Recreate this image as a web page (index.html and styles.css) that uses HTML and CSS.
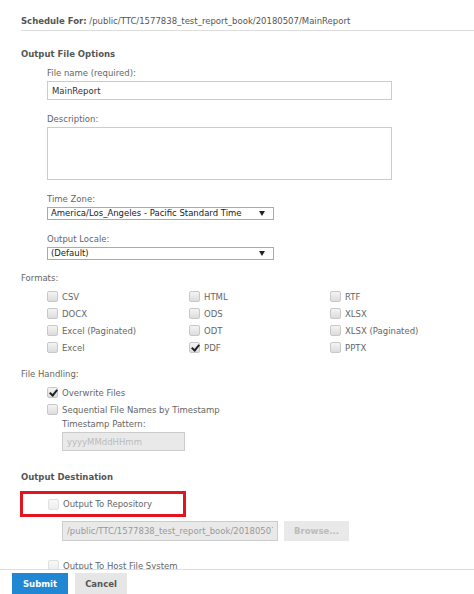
FILE: index.html
```html
<!DOCTYPE html>
<html lang="en">
<head>
  <meta charset="UTF-8">
  <title>Schedule Report</title>
  <link rel="stylesheet" href="styles.css">
</head>
<body>
  <div class="page">
    <div class="scroll">
      <div class="schedule-for"><b>Schedule For:</b> /public/TTC/1577838_test_report_book/20180507/MainReport</div>

      <h3 class="group-title">Output File Options</h3>
      <div class="group">
        <label class="field-label first">File name (required):</label>
        <input class="text wide" type="text" value="MainReport">

        <label class="field-label">Description:</label>
        <textarea class="text wide area"></textarea>

        <label class="field-label">Time Zone:</label>
        <div class="select">America/Los_Angeles - Pacific Standard Time<span class="arrow"></span></div>

        <label class="field-label">Output Locale:</label>
        <div class="select">(Default)<span class="arrow"></span></div>
      </div>

      <div class="sub-title">Formats:</div>
      <div class="formats">
        <label class="check"><input type="checkbox">CSV</label>
        <label class="check"><input type="checkbox">HTML</label>
        <label class="check"><input type="checkbox">RTF</label>
        <label class="check"><input type="checkbox">DOCX</label>
        <label class="check"><input type="checkbox">ODS</label>
        <label class="check"><input type="checkbox">XLSX</label>
        <label class="check"><input type="checkbox">Excel (Paginated)</label>
        <label class="check"><input type="checkbox">ODT</label>
        <label class="check"><input type="checkbox">XLSX (Paginated)</label>
        <label class="check"><input type="checkbox">Excel</label>
        <label class="check"><input type="checkbox" checked>PDF</label>
        <label class="check"><input type="checkbox">PPTX</label>
      </div>

      <div class="sub-title handling-title">File Handling:</div>
      <div class="handling">
        <label class="check"><input type="checkbox" checked>Overwrite Files</label>
        <label class="check"><input type="checkbox">Sequential File Names by Timestamp</label>
        <div class="pattern">
          <label class="field-label">Timestamp Pattern:</label>
          <input class="text disabled ts" type="text" placeholder="yyyyMMddHHmm" disabled>
        </div>
      </div>

      <h3 class="group-title dest-title">Output Destination</h3>
      <div class="highlight">
        <label class="check"><input type="checkbox" disabled>Output To Repository</label>
      </div>
      <div class="repo-row">
        <input class="text disabled path" type="text" value="/public/TTC/1577838_test_report_book/20180507/MainReport" disabled>
        <button class="btn browse" disabled>Browse...</button>
      </div>
      <div class="host">
        <label class="check"><input type="checkbox" disabled>Output To Host File System</label>
      </div>
    </div>

    <div class="footer">
      <button class="btn primary">Submit</button>
      <button class="btn secondary">Cancel</button>
    </div>
  </div>
</body>
</html>
```

FILE: styles.css
```css
html, body {
  margin: 0;
  height: 100%;
}
body {
  font-family: "DejaVu Sans", Verdana, sans-serif;
  font-size: 8.5px;
  color: #666;
  background: #fff;
}
.page {
  height: 594px;
  display: flex;
  flex-direction: column;
  overflow: hidden;
}
.scroll {
  flex: 1;
  overflow: hidden;
  padding-left: 21px;
}
.schedule-for {
  color: #555;
  line-height: 12px;
  padding: 15px 0 3px;
  border-bottom: 1px solid #ddd;
  white-space: nowrap;
}
.group-title {
  margin: 17px 0 0;
  font-size: 8.5px;
  line-height: 12px;
  color: #555;
}
.group {
  padding-left: 26px;
  display: flex;
  flex-direction: column;
  align-items: flex-start;
}
.field-label {
  margin-top: 13px;
  margin-bottom: 2px;
  line-height: 12px;
}
.field-label.first {
  margin-top: 7px;
}
.text {
  font-family: inherit;
  font-size: 8.5px;
  color: #333;
  border: 1px solid #ccc;
  box-sizing: border-box;
  padding: 0 4px;
  background: #fff;
  margin: 0;
}
.wide {
  width: 345px;
  height: 19px;
}
.area {
  height: 53px;
  resize: none;
  display: block;
}
.select {
  width: 227px;
  height: 13px;
  box-sizing: border-box;
  border: 1px solid #aaa;
  color: #222;
  padding: 0 3px;
  line-height: 11px;
  white-space: nowrap;
  position: relative;
}
.select .arrow {
  position: absolute;
  right: 8px;
  top: 3px;
  border-left: 3px solid transparent;
  border-right: 3px solid transparent;
  border-top: 5px solid #222;
}
.sub-title {
  margin-top: 12px;
  line-height: 12px;
}
.formats {
  display: grid;
  grid-template-columns: 142px 141px 120px;
  padding-left: 26px;
  margin-top: 6px;
  row-gap: 4px;
}
.check {
  display: flex;
  align-items: center;
  height: 13px;
  white-space: nowrap;
}
.check input {
  appearance: none;
  -webkit-appearance: none;
  width: 11px;
  height: 11px;
  margin: 0 4px 0 0;
  border: 1px solid #c8c8c8;
  border-radius: 2px;
  background: linear-gradient(#f4f4f4, #dcdcdc);
  position: relative;
  flex: none;
}
.check input:checked::after {
  content: "";
  position: absolute;
  left: 3px;
  top: 0;
  width: 3px;
  height: 6px;
  border: solid #222;
  border-width: 0 2px 2px 0;
  transform: rotate(40deg);
}
.check input:disabled {
  border-color: #e0e0e0;
  background: linear-gradient(#f8f8f8, #ededed);
}
.handling-title {
  margin-top: 14px;
}
.handling {
  padding-left: 26px;
  margin-top: 6px;
  display: flex;
  flex-direction: column;
  gap: 4px;
}
.pattern {
  padding-left: 15px;
  display: flex;
  flex-direction: column;
  align-items: flex-start;
}
.pattern .field-label {
  margin-top: -2px;
}
.disabled {
  background: #e9e9e9;
  border-color: #ccc;
  color: #aaa;
}
.disabled::placeholder {
  color: #bbb;
}
.ts {
  width: 123px;
  height: 19px;
}
.dest-title {
  margin-top: 20px;
}
.highlight {
  margin: 8px 0 0 -1px;
  width: 135px;
  height: 20px;
  border: 3px solid #e3141f;
  padding-left: 25px;
  display: flex;
  align-items: center;
}
.repo-row {
  display: flex;
  gap: 6px;
  padding-left: 41px;
  margin-top: 4px;
}
.path {
  width: 216px;
  height: 20px;
  color: #999;
}
.btn {
  font-family: inherit;
  font-size: 8.5px;
  font-weight: bold;
  border: none;
  padding: 0;
}
.browse {
  width: 65px;
  height: 20px;
  background: #e9e9e9;
  color: #bbb;
}
.host {
  padding-left: 27px;
  margin-top: 18px;
}
.footer {
  border-top: 1px solid #ddd;
  padding: 3px 0 0 12px;
  height: 21px;
  display: flex;
  align-items: flex-start;
  gap: 7px;
  background: #fff;
}
.primary {
  width: 56px;
  height: 21px;
  background: #1f87d4;
  color: #fff;
}
.secondary {
  width: 52px;
  height: 21px;
  background: #e6e6e6;
  color: #555;
}
```
